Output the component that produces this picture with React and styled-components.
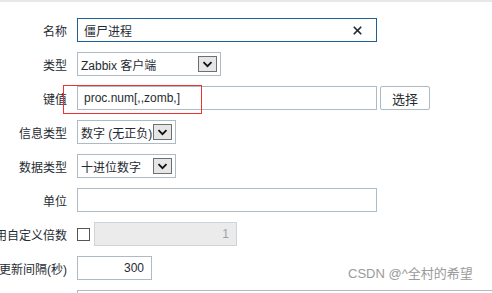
import React from 'react'
import styled, { createGlobalStyle } from 'styled-components'
import { X } from 'lucide-react'

const GlobalStyle = createGlobalStyle`
  html, body {
    margin: 0;
    padding: 0;
    background: #fff;
    overflow: hidden;
  }
  body {
    font-family: "Liberation Sans", "Noto Sans CJK SC", sans-serif;
    color: #1f2c33;
  }
`;

const Page = styled.div`
  position: relative;
  width: 492px;
  height: 293px;
  border-top: 2px solid #e6e9ec;
  box-sizing: border-box;
  overflow: hidden;
`;

const Form = styled.div`
  display: grid;
  grid-template-columns: 67px 1fr;
  column-gap: 10px;
  row-gap: 10px;
  grid-auto-rows: 24px;
  padding-top: 16px;
`;

const Label = styled.div`
  display: flex;
  align-items: center;
  justify-content: flex-end;
  white-space: nowrap;
  font-size: 12px;
  color: #1f2c33;
  min-width: 0;
`;

const Field = styled.div`
  position: relative;
  display: flex;
  align-items: center;
  gap: ${p => p.$gap || 0}px;
`;

const Input = styled.div`
  box-sizing: border-box;
  width: ${p => p.$w}px;
  height: 24px;
  display: flex;
  align-items: center;
  justify-content: ${p => (p.$right ? 'flex-end' : 'space-between')};
  padding: 0 ${p => (p.$right ? 7 : 6)}px;
  border: 1px solid ${p => (p.$focus ? '#1f5f95' : p.$disabled ? '#cdd5da' : '#acbbc5')};
  background: ${p => (p.$disabled ? '#ebebeb' : '#fff')};
  color: ${p => (p.$disabled ? '#97a3ab' : '#1f2c33')};
  font-size: 12px;
  white-space: nowrap;
`;

const Select = styled.div`
  box-sizing: border-box;
  width: ${p => p.$w}px;
  height: 24px;
  display: flex;
  align-items: center;
  justify-content: space-between;
  padding: 0 3px;
  border: 1px solid #acbbc5;
  background: #fff;
  font-size: 12px;
  white-space: nowrap;
`;

const Arrow = styled.div`
  box-sizing: border-box;
  width: 19px;
  height: 16px;
  display: flex;
  align-items: center;
  justify-content: center;
  background: #e6e6e6;
  border: 1px solid #6f6f6f;
  flex-shrink: 0;
`;

const Button = styled.div`
  box-sizing: border-box;
  width: 50px;
  height: 24px;
  display: flex;
  align-items: center;
  justify-content: center;
  border: 1px solid #acbbc5;
  border-radius: 2px;
  background: #fff;
  font-size: 13px;
  color: #1f2c33;
`;

const Highlight = styled.span`
  position: absolute;
  z-index: 2;
  left: -14px;
  top: -1px;
  width: 139px;
  height: 29px;
  box-sizing: border-box;
  border: 1px solid #f23030;
  pointer-events: none;
`;

const Check = styled.div`
  box-sizing: border-box;
  width: 13px;
  height: 13px;
  border: 1px solid #555;
  background: #fff;
  margin-top: 6px;
  align-self: flex-start;
`;

const Watermark = styled.div`
  position: absolute;
  left: 348px;
  top: 261px;
  font-size: 13px;
  color: #9a9a9a;
  white-space: nowrap;
`;

const Chevron = () => (
  <svg width="11" height="7" viewBox="0 0 11 7">
    <path d="M1.5 1.2 L5.5 5.2 L9.5 1.2" fill="none" stroke="#111" strokeWidth="1.8" />
  </svg>
);

export default function App() {
  return (
    <Page>
      <GlobalStyle />
      <Form>
        <Label>名称</Label>
        <Field>
          <Input $w={300} $focus>
            <span>僵尸进程</span>
            <X size={13} strokeWidth={3.2} color="#1f2c33" style={{ marginRight: 6 }} />
          </Input>
        </Field>

        <Label>类型</Label>
        <Field>
          <Select $w={144}>
            <span>Zabbix 客户端</span>
            <Arrow><Chevron /></Arrow>
          </Select>
        </Field>

        <Label>键值</Label>
        <Field $gap={3}>
          <Input $w={300}><span>proc.num[,,zomb,]</span></Input>
          <Button>选择</Button>
          <Highlight />
        </Field>

        <Label>信息类型</Label>
        <Field>
          <Select $w={99}>
            <span>数字 (无正负)</span>
            <Arrow><Chevron /></Arrow>
          </Select>
        </Field>

        <Label>数据类型</Label>
        <Field>
          <Select $w={99}>
            <span>十进位数字</span>
            <Arrow><Chevron /></Arrow>
          </Select>
        </Field>

        <Label>单位</Label>
        <Field>
          <Input $w={300} />
        </Field>

        <Label>启用自定义倍数</Label>
        <Field $gap={4}>
          <Check />
          <Input $w={143} $right $disabled>1</Input>
        </Field>

        <Label>更新间隔(秒)</Label>
        <Field>
          <Input $w={75} $right>300</Input>
        </Field>

        <Label />
        <Field>
          <Input $w={420} />
        </Field>
      </Form>
      <Watermark>CSDN @^全村的希望</Watermark>
    </Page>
  );
}
